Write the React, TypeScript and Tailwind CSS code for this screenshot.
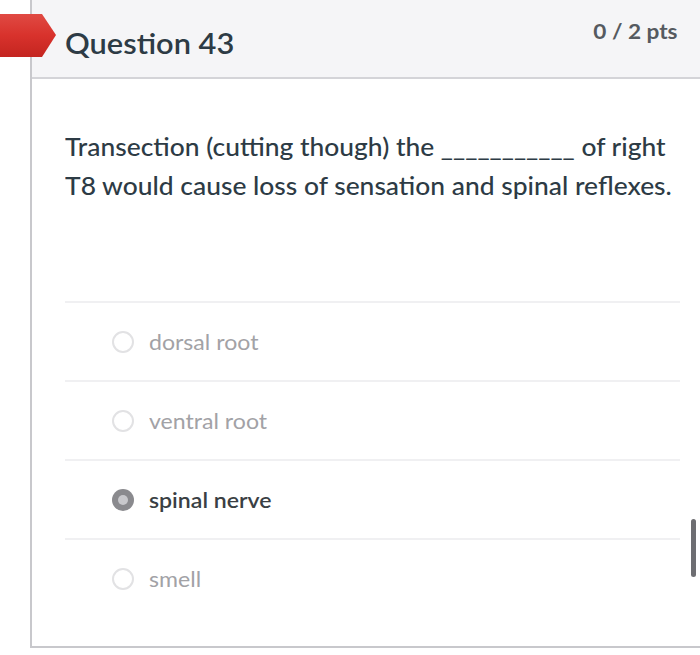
import React from "react";

const opts = [
  { t: "dorsal root", sel: false },
  { t: "ventral root", sel: false },
  { t: "spinal nerve", sel: true },
  { t: "smell", sel: false },
];

export default function App() {
  return (
    <div className="relative w-[700px] h-[655px] bg-white overflow-hidden" style={{ fontFamily: "Lato, 'Open Sans', sans-serif" }}>
      <div className="absolute left-0 top-[14px] z-10">
        <svg width="58" height="44" viewBox="0 0 58 44">
          <defs>
            <linearGradient id="fg" x1="0" y1="0" x2="0" y2="1">
              <stop offset="0" stopColor="#e04a43" />
              <stop offset="0.5" stopColor="#d8322c" />
              <stop offset="1" stopColor="#c42520" />
            </linearGradient>
          </defs>
          <path d="M0 0 H42 L56 21 L42 43 H0 Z" fill="url(#fg)" />
        </svg>
      </div>
      <div className="ml-[30px] h-[648px] border-l-2 border-b-2 border-[#c8c8cc] flex flex-col">
        <div className="h-[79px] bg-[#f5f5f7] border-b-2 border-[#d4d4d8] flex items-start justify-between pl-[33px] pr-[22px]">
          <div className="mt-[26px] text-[28px] leading-[34px] font-semibold text-[#2d3b45] origin-left scale-x-[1.1] whitespace-nowrap">Question 43</div>
          <div className="mt-[18px] text-[20px] leading-[26px] font-bold text-[#555a60] origin-right scale-x-[1.13] whitespace-nowrap">0 / 2 pts</div>
        </div>
        <div className="pl-[33px] pr-[22px] pt-[48px] text-[24px] leading-[39px] text-[#2d3b45] font-medium">
          <div className="origin-left scale-x-[1.1] whitespace-nowrap">Transection (cutting though) the ___________ of right</div>
          <div className="origin-left scale-x-[1.1] whitespace-nowrap">T8 would cause loss of sensation and spinal reflexes.</div>
        </div>
        <div className="ml-[33px] mr-[20px] mt-[96px]">
          {opts.map((o, i) => (
            <div key={i} className="h-[79px] flex items-center pl-[47px] border-t-2 border-[#f0f0f2]">
              {o.sel ? (
                <div className="w-[22px] h-[22px] rounded-full bg-[#8a8a8e] flex items-center justify-center">
                  <div className="w-[10px] h-[10px] rounded-full bg-[#c8c8cc]" />
                </div>
              ) : (
                <div className="w-[22px] h-[22px] rounded-full border-2 border-[#e2e2e4]" />
              )}
              <span className={`ml-[15px] inline-block origin-left scale-x-[1.1] whitespace-nowrap text-[21px] ${o.sel ? "text-[#3a3f44] font-semibold" : "text-[#a2a2a6]"}`}>{o.t}</span>
            </div>
          ))}
        </div>
      </div>
      <div className="absolute left-[691px] top-[519px] w-[5px] h-[58px] rounded-full bg-[#6e6e72]" />
    </div>
  );
}
